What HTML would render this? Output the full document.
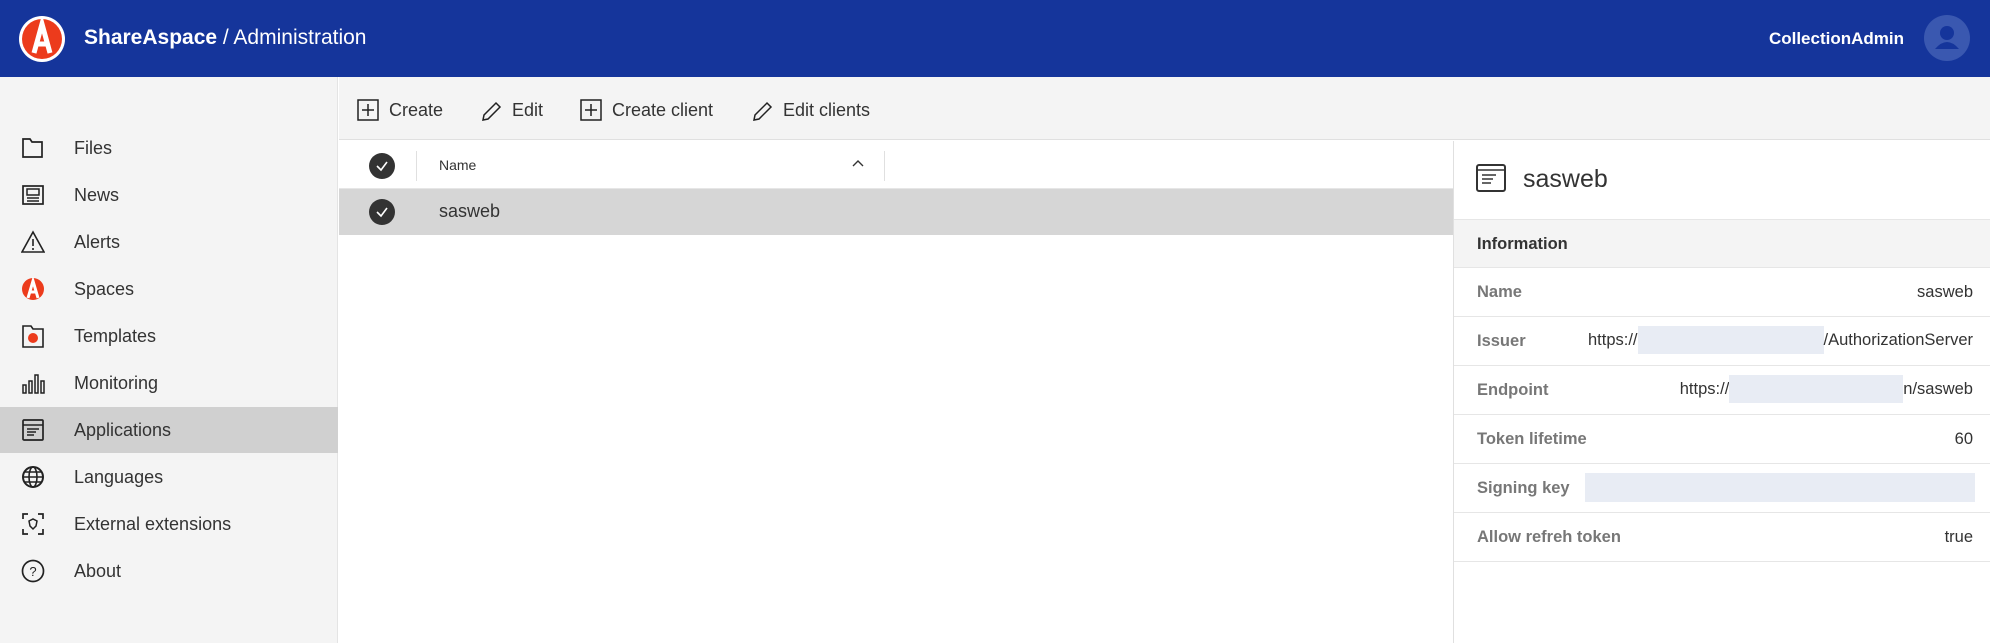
<!DOCTYPE html>
<html><head><meta charset="utf-8"><style>
*{box-sizing:border-box;margin:0;padding:0}
body{width:1990px;height:643px;overflow:hidden;font-family:"Liberation Sans",sans-serif;background:#fff;color:#222;position:relative}
.hdr{position:absolute;left:0;top:0;width:1990px;height:77px;background:#15359b;color:#fff}
.logo{position:absolute;left:19px;top:16px;width:46px;height:46px;border-radius:50%;background:#fff}
.title{position:absolute;left:84px;top:26px;font-size:21px}
.user{position:absolute right:86px;top:29px;font-size:17px;font-weight:bold}
.user{position:absolute;right:86px}
.av{position:absolute;right:20px;top:15px;width:46px;height:46px;border-radius:50%;background:#3a58b0}
.side{position:absolute;left:0;top:77px;width:338px;height:566px;background:#f4f4f4;border-right:1px solid #e4e4e4}
.item{position:absolute;left:0;width:338px;height:46px;font-size:18px;color:#333}
.item span{position:absolute;left:74px;top:13px}
.item svg{position:absolute;left:21px;top:11px}
.sel{background:#d0d0d0}
.tb{position:absolute;left:339px;top:77px;width:1651px;height:63px;background:#f4f4f4;border-bottom:1px solid #e0e0e0}
.tbi{position:absolute;top:23px;font-size:18px;color:#333}
.tbi svg{position:absolute;left:-32px;top:-1px}
.grid{position:absolute;left:339px;top:141px;width:1114px}
.gh{height:48px;border-bottom:1px solid #e6e6e6;position:relative}
.gr{height:46px;background:#d6d6d6;position:relative}
.chk{position:absolute;left:30px;width:26px;height:26px;border-radius:50%;background:#333}
.rp{position:absolute;left:1453px;top:141px;width:537px;height:502px;border-left:1px solid #e0e0e0}
.row{position:absolute;left:0;width:537px;height:49px;border-bottom:1.5px solid #e6e6e6;font-size:16.5px}
.row b{position:absolute;left:23px;top:15px;color:#777}
.row i{font-style:normal;position:absolute;right:18px;top:15px;color:#333;white-space:nowrap}
.row i.f{display:flex;align-items:center;top:9px;height:28px}
.bl{display:block;background:#e8ecf4;height:28px}
.blur{position:absolute;background:#e8ecf4}
</style></head><body>
<div class="hdr">
 <div class="logo"><svg width="46" height="46" viewBox="0 0 46 46"><circle cx="23" cy="23" r="20" fill="#ec3b1c"/><path d="M15 37 L23 8 L31 37 M18 28 H28" stroke="#fff" stroke-width="5" fill="none"/></svg></div>
 <div class="title"><b>ShareAspace</b> / Administration</div>
 <div class="user" style="top:29px;font-size:17px;font-weight:bold">CollectionAdmin</div>
 <div class="av"><svg width="46" height="46" viewBox="0 0 46 46"><circle cx="23" cy="18" r="7" fill="#15359b"/><path d="M11 34 Q23 20 35 34 Z" fill="#15359b"/></svg></div>
</div>
<div class="side">
 <div class="item" style="top:48px"><svg width="24" height="24"><path d="M2 3h7l2 3h10v15H2z" fill="none" stroke="#222" stroke-width="1.7"/></svg><span>Files</span></div>
 <div class="item" style="top:95px"><svg width="24" height="24"><rect x="2" y="3" width="20" height="18" fill="none" stroke="#222" stroke-width="1.7"/><rect x="6" y="6" width="12" height="6" fill="none" stroke="#222" stroke-width="1.5"/><path d="M6 15h12M6 18h12" stroke="#222" stroke-width="1.5"/></svg><span>News</span></div>
 <div class="item" style="top:142px"><svg width="24" height="24"><path d="M12 2L23 22H1z" fill="none" stroke="#222" stroke-width="1.6"/><path d="M12 9v7M12 18v2" stroke="#222" stroke-width="1.6"/></svg><span>Alerts</span></div>
 <div class="item" style="top:189px"><svg width="24" height="24"><circle cx="12" cy="12" r="11" fill="#ec3b1c"/><path d="M7 21L12 4L17 21M9 15h6" stroke="#fff" stroke-width="3" fill="none"/></svg><span>Spaces</span></div>
 <div class="item" style="top:236px"><svg width="24" height="24"><path d="M2 2h8l2 3h10v18H2z" fill="none" stroke="#222" stroke-width="1.6"/><circle cx="12" cy="14" r="5" fill="#ec3b1c"/></svg><span>Templates</span></div>
 <div class="item" style="top:283px"><svg width="24" height="24"><path d="M2 14h3v8H2zM8 10h3v12H8zM14 4h3v18h-3zM20 10h3v12h-3z" fill="none" stroke="#222" stroke-width="1.5"/></svg><span>Monitoring</span></div>
 <div class="item sel" style="top:330px"><svg width="24" height="24"><rect x="2" y="2" width="20" height="20" rx="1" fill="none" stroke="#222" stroke-width="1.7"/><path d="M2 7h20M6 11h12M6 14h9M6 17h7" stroke="#222" stroke-width="1.6"/></svg><span>Applications</span></div>
 <div class="item" style="top:377px"><svg width="24" height="24"><circle cx="12" cy="12" r="10" fill="none" stroke="#222" stroke-width="2"/><ellipse cx="12" cy="12" rx="4" ry="10" fill="none" stroke="#222" stroke-width="1.6"/><path d="M2 12h20M4 7h16M4 17h16" stroke="#222" stroke-width="1.6"/></svg><span>Languages</span></div>
 <div class="item" style="top:424px"><svg width="24" height="24"><path d="M2 7V2h5M17 2h5v5M22 17v5h-5M7 22H2v-5" fill="none" stroke="#222" stroke-width="1.7"/><path d="M8 9l4-2 4 2-1 5-3 3-3-3z" fill="none" stroke="#222" stroke-width="1.5"/></svg><span>External extensions</span></div>
 <div class="item" style="top:471px"><svg width="24" height="24"><circle cx="12" cy="12" r="10.5" fill="none" stroke="#222" stroke-width="1.7"/><text x="12" y="17" font-size="13" text-anchor="middle" font-family="Liberation Sans" fill="#222">?</text></svg><span>About</span></div>
</div>
<div class="tb">
 <div class="tbi" style="left:50px"><svg width="22" height="22"><rect x="1" y="1" width="20" height="20" fill="none" stroke="#222" stroke-width="1.5"/><path d="M11 5v12M5 11h12" stroke="#222" stroke-width="1.5"/></svg>Create</div>
 <div class="tbi" style="left:173px"><svg width="24" height="24"><path d="M3 21l1-5L16 4l4 4L8 20z" fill="none" stroke="#222" stroke-width="1.5"/></svg>Edit</div>
 <div class="tbi" style="left:273px"><svg width="22" height="22"><rect x="1" y="1" width="20" height="20" fill="none" stroke="#222" stroke-width="1.5"/><path d="M11 5v12M5 11h12" stroke="#222" stroke-width="1.5"/></svg>Create client</div>
 <div class="tbi" style="left:444px"><svg width="24" height="24"><path d="M3 21l1-5L16 4l4 4L8 20z" fill="none" stroke="#222" stroke-width="1.5"/></svg>Edit clients</div>
</div>
<div class="grid">
 <div class="gh"><div class="chk" style="top:12px"><svg width="26" height="26"><path d="M8 13l4 4 6-8" stroke="#fff" stroke-width="1.6" fill="none"/></svg></div>
  <div style="position:absolute;left:77px;top:10px;height:30px;border-left:1px solid #e0e0e0"></div>
  <div style="position:absolute;left:100px;top:16px;font-size:14px;color:#333">Name</div>
  <svg style="position:absolute;left:512px;top:17px" width="14" height="10"><path d="M2 8l5-5 5 5" stroke="#333" stroke-width="1.4" fill="none"/></svg>
  <div style="position:absolute;left:545px;top:10px;height:30px;border-left:1px solid #e0e0e0"></div>
 </div>
 <div class="gr"><div class="chk" style="top:10px"><svg width="26" height="26"><path d="M8 13l4 4 6-8" stroke="#fff" stroke-width="1.6" fill="none"/></svg></div>
  <div style="position:absolute;left:100px;top:12px;font-size:18px;color:#333">sasweb</div></div>
</div>
<div class="rp">
 <svg style="position:absolute;left:22px;top:23px" width="30" height="28"><rect x="1" y="1" width="28" height="26" rx="2" fill="none" stroke="#333" stroke-width="2"/><path d="M1 6h28M6 11h14M6 15h11M6 19h9" stroke="#333" stroke-width="1.6"/></svg>
 <div style="position:absolute;left:69px;top:24px;font-size:25px;color:#333">sasweb</div>
 <div class="row" style="top:78px;background:#f4f4f4;border-top:1.5px solid #e6e6e6"><b style="color:#333">Information</b></div>
 <div class="row" style="top:127px"><b>Name</b><i>sasweb</i></div>
 <div class="row" style="top:176px"><b>Issuer</b><i class="f">https://<span class="bl" style="width:186px"></span>/AuthorizationServer</i></div>
 <div class="row" style="top:225px"><b>Endpoint</b><i class="f">https://<span class="bl" style="width:174px"></span>n/sasweb</i></div>
 <div class="row" style="top:274px"><b>Token lifetime</b><i>60</i></div>
 <div class="row" style="top:323px"><b>Signing key</b><div class="blur" style="left:131px;top:9px;width:390px;height:29px"></div></div>
 <div class="row" style="top:372px"><b>Allow refreh token</b><i>true</i></div>
</div>
</body></html>
